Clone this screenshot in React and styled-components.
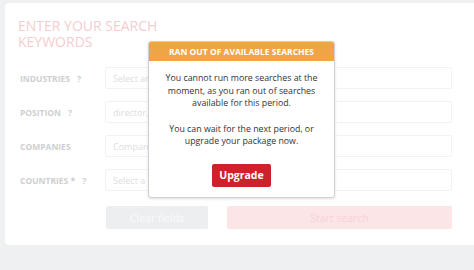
import React from "react";
import styled, { createGlobalStyle } from "styled-components";

const GlobalStyle = createGlobalStyle`
  html, body { margin: 0; padding: 0; }
  body {
    background: #eef0f1;
    font-family: "Open Sans", "Liberation Sans", sans-serif;
  }
  * { box-sizing: border-box; }
`;

const Page = styled.div`
  position: relative;
  width: 474px;
  height: 270px;
  padding: 3px 0 0 5px;
  overflow: hidden;
`;

const Card = styled.div`
  background: #ffffff;
  border-radius: 4px 0 0 4px;
  height: 242px;
  padding: 15px 22px 0 13px;
`;

const Title = styled.h1`
  margin: 0;
  font-size: 14px;
  line-height: 16px;
  font-weight: 400;
  color: #f5cdcf;
  text-transform: uppercase;
  width: 150px;
`;

const Form = styled.div`
  margin-top: 17px;
  display: flex;
  flex-direction: column;
  gap: 12px;
`;

const Row = styled.div`
  display: grid;
  grid-template-columns: 87px 1fr;
  align-items: center;
  height: 22px;
`;

const Label = styled.label`
  padding-left: 2px;
  font-size: 8.5px;
  font-weight: 700;
  color: #cdcfd1;
  white-space: nowrap;
`;

const Hint = styled.span`
  margin-left: 7px;
`;

const Input = styled.div`
  height: 22px;
  border: 1px solid #f1f2f2;
  border-radius: 2px;
  padding-left: 7px;
  display: flex;
  align-items: center;
  font-size: 9px;
  color: #dcdddf;
`;

const Actions = styled.div`
  margin-top: 15px;
  padding-left: 88px;
  display: grid;
  grid-template-columns: 102px 1fr;
  column-gap: 19px;
  height: 23px;
`;

const Button = styled.button`
  border: none;
  border-radius: 2px;
  font-family: inherit;
  font-size: 10.5px;
  background: ${(p) => (p.$primary ? "#fce5e7" : "#eceeef")};
  color: ${(p) => (p.$primary ? "#f7d2d6" : "#fbfbfc")};
  padding: 0;
`;

const Modal = styled.div`
  position: absolute;
  left: 148px;
  top: 41px;
  width: 187px;
  height: 157px;
  background: #ffffff;
  border: 1px solid #cfd0d1;
  border-radius: 3px;
  box-shadow: 0 1px 3px rgba(0, 0, 0, 0.12);
  display: flex;
  flex-direction: column;
  align-items: center;
  overflow: hidden;
`;

const ModalHeader = styled.div`
  align-self: stretch;
  height: 19px;
  background: #efa446;
  color: #ffffff;
  font-size: 8.5px;
  font-weight: 700;
  display: flex;
  align-items: center;
  justify-content: center;
  white-space: nowrap;
`;

const ModalBody = styled.div`
  padding: 11px 8px 0;
  text-align: center;
  font-size: 8.8px;
  line-height: 12.5px;
  color: #333333;
`;

const Para = styled.p`
  margin: 0 0 13px;
  &:last-child { margin-bottom: 0; }
`;

const UpgradeButton = styled.button`
  margin-top: 16px;
  width: 59px;
  height: 23px;
  border: none;
  border-radius: 2px;
  background: #d0212b;
  color: #ffffff;
  font-family: inherit;
  font-size: 10.5px;
  font-weight: 700;
  padding: 0;
`;

const fields = [
  { label: "Industries", hint: true, placeholder: "Select an industry" },
  { label: "Position", hint: true, placeholder: "director, manager" },
  { label: "Companies", hint: false, placeholder: "Company name" },
  { label: "Countries *", hint: true, placeholder: "Select a country" },
];

export default function App() {
  return (
    <>
      <GlobalStyle />
      <Page>
        <Card>
          <Title>Enter your search keywords</Title>
          <Form>
            {fields.map((f) => (
              <Row key={f.label}>
                <Label>
                  {f.label.toUpperCase()}
                  {f.hint && <Hint>?</Hint>}
                </Label>
                <Input>{f.placeholder}</Input>
              </Row>
            ))}
          </Form>
          <Actions>
            <Button>Clear fields</Button>
            <Button $primary>Start search</Button>
          </Actions>
        </Card>
        <Modal>
          <ModalHeader>RAN OUT OF AVAILABLE SEARCHES</ModalHeader>
          <ModalBody>
            <Para>
              You cannot run more searches at the moment, as you ran out of
              searches available for this period.
            </Para>
            <Para>
              You can wait for the next period, or upgrade your package now.
            </Para>
          </ModalBody>
          <UpgradeButton>Upgrade</UpgradeButton>
        </Modal>
      </Page>
    </>
  );
}
